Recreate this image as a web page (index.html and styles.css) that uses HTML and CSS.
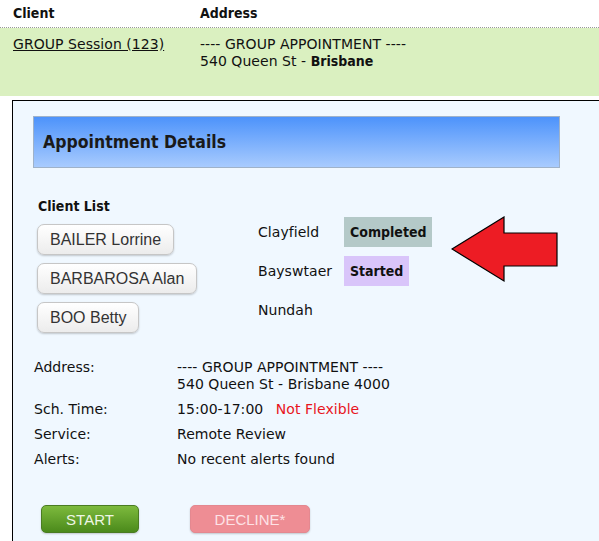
FILE: index.html
```html
<!DOCTYPE html>
<html lang="en">

<head>
    <meta charset="UTF-8">
    <meta name="viewport" content="width=device-width, initial-scale=1.0">
    <title>Appointment</title>
    <link rel="stylesheet" href="styles.css">
</head>

<body>
    <div class="list-head">
        <div class="col-client">Client</div>
        <div class="col-address">Address</div>
    </div>
    <div class="list-row">
        <div class="col-client"><a href="#">GROUP Session (123)</a></div>
        <div class="col-address">
            ---- GROUP APPOINTMENT ----<br>
            540 Queen St - <b>Brisbane</b>
        </div>
    </div>

    <div class="panel">
        <div class="panel-title">Appointment Details</div>

        <div class="clients">
            <div class="client-list">
                <h3>Client List</h3>
                <button class="client-btn">BAILER Lorrine</button>
                <button class="client-btn">BARBAROSA Alan</button>
                <button class="client-btn">BOO Betty</button>
            </div>
            <div class="suburbs">
                <div class="suburb"><span class="suburb-name">Clayfield</span><span class="badge completed">Completed</span></div>
                <div class="suburb"><span class="suburb-name">Bayswtaer</span><span class="badge started">Started</span></div>
                <div class="suburb"><span class="suburb-name">Nundah</span></div>
            </div>
            <svg class="arrow" width="110" height="70" viewBox="0 0 110 70">
                <polygon points="1,33 53,1 53,17 106,17 106,50 53,50 53,65" fill="#ed1c24" stroke="#000" stroke-width="1.2" />
            </svg>
        </div>

        <table class="details">
            <tr>
                <td class="label">Address:</td>
                <td>---- GROUP APPOINTMENT ----<br>540 Queen St - Brisbane 4000</td>
            </tr>
            <tr>
                <td class="label">Sch. Time:</td>
                <td>15:00-17:00 <span class="not-flex">Not Flexible</span></td>
            </tr>
            <tr>
                <td class="label">Service:</td>
                <td>Remote Review</td>
            </tr>
            <tr>
                <td class="label">Alerts:</td>
                <td>No recent alerts found</td>
            </tr>
        </table>

        <div class="actions">
            <button class="btn btn-start">START</button>
            <button class="btn btn-decline">DECLINE*</button>
        </div>
    </div>
</body>

</html>
```

FILE: styles.css
```css
/* Base */
body {
    margin: 0;
    font-family: 'DejaVu Sans', sans-serif;
    font-size: 14px;
    line-height: 17px;
    letter-spacing: 0.05px;
    color: #111;
    background-color: #fff;
}

b,
h3,
.list-head,
.panel-title,
.badge {
    font-family: 'DejaVu Sans Condensed', 'DejaVu Sans', sans-serif;
    letter-spacing: 0;
}

/* Appointment list */
.list-head,
.list-row {
    display: flex;
}

.list-head {
    height: 27px;
    font-weight: bold;
    border-bottom: 1px dotted #999;
}

.list-head > div {
    padding-top: 5px;
}

.col-client {
    width: 187px;
    padding-left: 13px;
}

.list-row {
    height: 60px;
    padding-top: 8px;
    background-color: #daf0c0;
}

.list-row a {
    color: #111;
}

/* Panel */
.panel {
    margin: 4px 0 0 12px;
    padding: 15px 0 0 20px;
    height: 430px;
    border-top: 1px solid #000;
    border-left: 1px solid #000;
    background-color: #f0f8ff;
}

.panel-title {
    width: 516px;
    height: 50px;
    padding-left: 9px;
    border: 1px solid #9fb2c9;
    background: linear-gradient(#4d93fb, #a8cbfe);
    font-size: 17.5px;
    font-weight: bold;
    line-height: 51px;
    color: #1a1a1a;
}

/* Clients */
.clients {
    display: flex;
    position: relative;
    margin-top: 30px;
    padding-left: 4px;
}

.client-list {
    width: 221px;
}

.client-list h3 {
    margin: 0 0 9px 1px;
    font-size: 14px;
    line-height: 17px;
}

.client-btn {
    display: block;
    height: 31px;
    margin-bottom: 8px;
    padding: 0 12px;
    font-family: 'Liberation Sans', Arial, sans-serif;
    font-size: 16px;
    letter-spacing: 0;
    color: #333;
    background: linear-gradient(#fff, #ececec);
    border: 1px solid #c6c6c6;
    border-radius: 7px;
    box-shadow: 0 1px 2px rgba(0, 0, 0, 0.2);
}

.suburbs {
    padding-top: 19px;
}

.suburb {
    display: flex;
    align-items: center;
    height: 30px;
    margin-bottom: 9px;
}

.suburb-name {
    width: 86px;
}

.badge {
    padding: 0 6px;
    line-height: 30px;
    font-weight: bold;
}

.completed {
    background-color: #b4c9c8;
}

.started {
    background-color: #d9c5fa;
}

.arrow {
    position: absolute;
    left: 418px;
    top: 18px;
}

/* Details */
.details {
    margin-top: 14px;
    margin-left: 1px;
    border-collapse: collapse;
}

.details td {
    padding: 4px 0;
    vertical-align: top;
}

.details .label {
    width: 143px;
}

.not-flex {
    margin-left: 8px;
    color: #e8141c;
}

/* Actions */
.actions {
    display: flex;
    gap: 51px;
    margin-top: 33px;
    padding-left: 8px;
}

.btn {
    height: 28px;
    border-radius: 5px;
    font-family: 'Liberation Sans', Arial, sans-serif;
    font-size: 15px;
    letter-spacing: 0;
    box-shadow: 0 1px 2px rgba(0, 0, 0, 0.2);
}

.btn-start {
    width: 98px;
    color: #eef6e4;
    background: linear-gradient(#7dba3d, #4b8a1b);
    border: 1px solid #4a7c22;
}

.btn-decline {
    width: 120px;
    color: #fde2e6;
    background-color: #ee8d94;
    border: 1px solid #e48890;
}
```
